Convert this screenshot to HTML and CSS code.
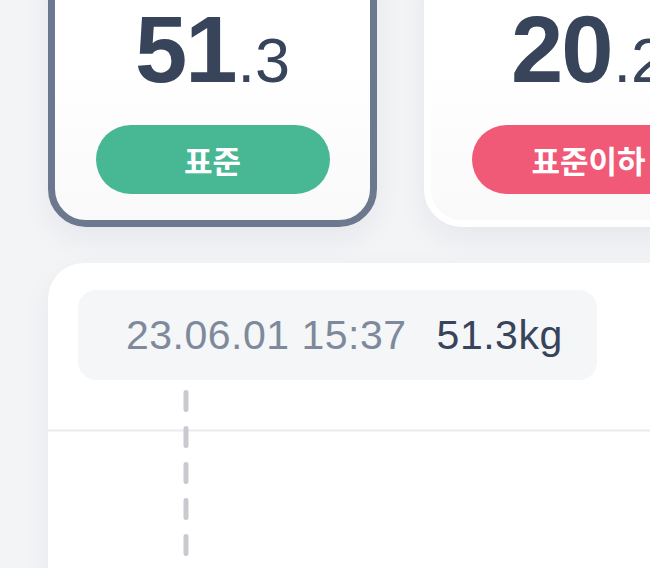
FILE: index.html
```html
<html lang="ko">
<head>
    <meta charset="UTF-8">
    <meta name="viewport" content="width=device-width, initial-scale=1.0">
    <title>체중 기록</title>
    <link rel="stylesheet" href="styles.css">
</head>
<body>
    <div class="page">
        <div class="stats">
            <div class="card active">
                <div class="value">51<span class="dec">.3</span></div>
                <div class="badge good">표준</div>
            </div>
            <div class="card">
                <div class="value">20<span class="dec">.2</span></div>
                <div class="badge low">표준이하</div>
            </div>
        </div>

        <div class="chart">
            <div class="tip">
                <span class="date">23.06.01 15:37</span>
                <span class="weight">51.3kg</span>
            </div>
            <svg class="plot" width="602" height="188" viewBox="0 0 602 188">
                <line x1="0" y1="50.5" x2="602" y2="50.5" stroke="#eaebee" stroke-width="2"/>
                <line x1="138" y1="12.5" x2="138" y2="176" stroke="#c9cad0" stroke-width="5" stroke-linecap="round" stroke-dasharray="17 19"/>
            </svg>
        </div>
    </div>
</body>
</html>
```

FILE: styles.css
```css
*{margin:0;padding:0;box-sizing:border-box;}
body{background:#f3f4f6;font-family:"Liberation Sans",Arial,"Noto Sans CJK KR",sans-serif;overflow:hidden;}
.page{padding:0 0 0 48px;}

.stats{display:flex;gap:47px;margin-top:-60px;}
.card{flex-shrink:0;width:329px;padding:53px 0 26px;border:7px solid #fff;border-radius:38px;background:linear-gradient(#fff 45%,#f9f9fa);box-shadow:0 12px 30px rgba(30,40,60,0.06);text-align:center;}
.card.active{border-color:#6c788d;}
.card .value{font-size:94px;line-height:100px;height:100px;font-weight:700;color:#38445a;letter-spacing:-2px;}
.card .value .dec{font-size:63px;line-height:1;font-weight:400;letter-spacing:0;margin-left:2px;}

.badge{width:234px;height:69px;line-height:69px;margin:25px auto 0;border-radius:35px;color:#fff;font-family:"Noto Sans CJK KR",sans-serif;font-size:31px;font-weight:700;}
.badge.good{background:#48b794;}
.badge.low{background:#f05a76;}

.chart{margin-top:36px;width:640px;height:340px;background:#fff;border-radius:36px 0 0 0;box-shadow:0 10px 30px rgba(30,40,60,0.05);padding-top:27px;}
.tip{display:flex;align-items:center;width:519px;height:90px;margin-left:30px;padding-left:48px;border-radius:18px;background:#f4f6f8;font-size:41px;letter-spacing:0.5px;}
.tip .date{color:#7e8a9b;}
.tip .weight{color:#38445a;margin-left:30px;}
.plot{display:block;}
```
